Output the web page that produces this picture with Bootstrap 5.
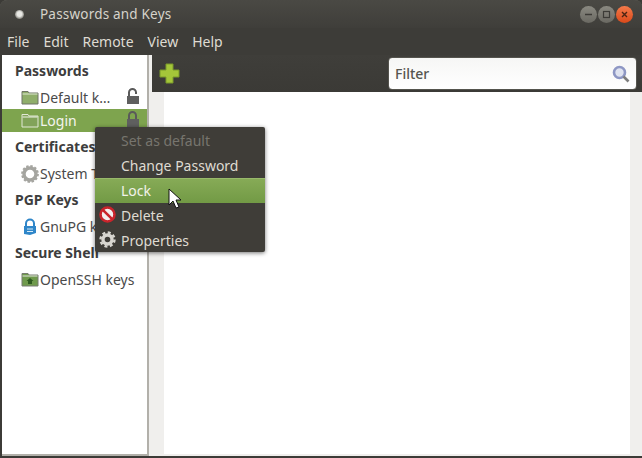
<!DOCTYPE html>
<html lang="en">
<head>
  <meta charset="UTF-8" />
  <title>Passwords and Keys</title>
  <link href="https://cdn.jsdelivr.net/npm/bootstrap@5.3.3/dist/css/bootstrap.min.css" rel="stylesheet" />
  <style>
    html, body { height: 100%; margin: 0; overflow: hidden; }
    body { background: #3c3b37; font-family: "Noto Sans", "Open Sans", sans-serif; font-size: 14px; }
    .app-window { position: relative; width: 642px; height: 458px; background: #3c3b37; overflow: hidden; border-radius: 7px 7px 0 0; box-shadow: inset 0 1px 0 #6b6a64; }
    .title-bar { height: 28px; padding: 0 9px 0 15px; background: linear-gradient(#4a4944, #3f3e3a); color: #d6d3cb; font-size: 13.5px; letter-spacing: .2px; }
    .title-dot { width: 9px; height: 9px; border-radius: 50%; background: radial-gradient(circle at 50% 45%, #e8e8e4 35%, #77766f 75%, #3c3b37); margin-right: 16px; }
    .win-btn { width: 17px; height: 17px; border-radius: 50%; background: linear-gradient(#8a8981, #6a6962); margin-left: 1px; color: #3c3b37; }
    .win-btn.close-red { background: linear-gradient(#f47a4a, #d9491a); }
    .menu-bar { height: 27px; padding-left: 7px; gap: 14px; color: #dfdbd2; font-size: 14px; background: #3d3c38; }
    .body-row { height: 401px; padding-left: 2px; }
    .side-pane { width: 147px; background: #fff; border-right: 2px solid #b2b0aa; border-bottom: 2px solid #b2b0aa; color: #3c3c3c; flex: none; padding-top: 5px; }
    .side-head { height: 26px; line-height: 22px; padding-left: 13px; font-weight: 700; font-size: 14px; color: #3d3d3d; white-space: nowrap; }
    .side-item { height: 23px; padding-left: 19px; gap: 1px; white-space: nowrap; color: #4a4a4a; position: relative; }
    .side-item.picked { background: #7ea44e; color: #f4f4ee; }
    .side-lock { position: absolute; left: 124px; top: 2px; }
    .main-pane { min-width: 0; background: #f0efed; }
    .tool-strip { height: 37px; margin-left: 3px; background: linear-gradient(#3f3e3a, #3b3a36); padding: 0 5px 0 7px; }
    .filter-box { width: 249px; height: 33px; background: linear-gradient(#f6f6f5, #fff); border: 1px solid #55544e; border-radius: 4px; padding: 0 6px; color: #55554f; font-weight: 500; font-size: 14px; }
    .content-area { height: 362px; margin: 0 12px 2px 15px; background: #fff; }
    .pop-menu { position: absolute; left: 95px; top: 127px; width: 170px; height: 125px; padding: 1px 0 0; background: #3f3d38; color: #dfdbd2; border-radius: 2px; box-shadow: 0 1px 4px rgba(0,0,0,.55); font-size: 14px; }
    .pop-row { height: 25px; padding-left: 26px; position: relative; }
    .pop-row.off { color: #77756e; }
    .pop-row.on { background: linear-gradient(#87ab57, #729a45); color: #f2f2ea; box-shadow: inset 0 1px 0 #98b96b; }
    .pop-icon { position: absolute; left: 4px; top: 3px; }
    .mouse-arrow { position: absolute; left: 168px; top: 188px; }
  </style>
</head>
<body>
  <div class="app-window">
    <div class="title-bar d-flex align-items-center">
      <span class="title-dot"></span>
      <span class="flex-grow-1">Passwords and Keys</span>
      <span class="win-btn d-flex align-items-center justify-content-center">
        <svg width="9" height="9" viewBox="0 0 9 9"><path d="M1 4.5h7" stroke="#3c3b37" stroke-width="1.5"/></svg>
      </span>
      <span class="win-btn d-flex align-items-center justify-content-center">
        <svg width="9" height="9" viewBox="0 0 9 9"><rect x="1.5" y="1.5" width="6" height="6" fill="none" stroke="#3c3b37" stroke-width="1.2"/></svg>
      </span>
      <span class="win-btn close-red d-flex align-items-center justify-content-center">
        <svg width="9" height="9" viewBox="0 0 9 9"><path d="M2 2l5 5M7 2l-5 5" stroke="#4a2413" stroke-width="1.4"/></svg>
      </span>
    </div>
    <div class="menu-bar d-flex align-items-center">
      <span>File</span><span>Edit</span><span>Remote</span><span>View</span><span>Help</span>
    </div>
    <div class="body-row d-flex">
      <div class="side-pane">
        <div class="side-head">Passwords</div>
        <div class="side-item d-flex align-items-center">
          <svg width="18" height="15" viewBox="0 0 18 15"><path d="M1 3V1.5h6l1 1.5h9v11H1z" fill="#8fae6a" stroke="#6f7466"/><path d="M1.5 4h15" stroke="#dfe8d2"/></svg>
          <span>Default k…</span>
          <svg class="side-lock" width="14" height="17" viewBox="0 0 14 17"><path d="M3 8V4.5a3.5 3.5 0 0 1 7 0V6" fill="none" stroke="#5a5a5a" stroke-width="2"/><rect x="1" y="8" width="12" height="8" fill="#5f5f5f"/></svg>
        </div>
        <div class="side-item picked d-flex align-items-center">
          <svg width="18" height="15" viewBox="0 0 18 15"><path d="M1 3V1.5h6l1 1.5h9v11H1z" fill="#82a35a" stroke="#e2e8d6"/><path d="M1.5 4h15" stroke="#eef2e6"/></svg>
          <span>Login</span>
          <svg class="side-lock" width="14" height="17" viewBox="0 0 14 17"><path d="M3 8V4.5a3.5 3.5 0 0 1 7 0V8" fill="none" stroke="#5a5a5a" stroke-width="2"/><rect x="1" y="8" width="12" height="8" fill="#5f5f5f"/></svg>
        </div>
        <div class="side-head mt-1">Certificates</div>
        <div class="side-item d-flex align-items-center">
          <svg width="18" height="18" viewBox="0 0 18 18"><circle cx="9" cy="9" r="6" fill="none" stroke="#a5a5a0" stroke-width="3.4"/><circle cx="9" cy="9" r="8" fill="none" stroke="#a5a5a0" stroke-width="1.8" stroke-dasharray="2.4 1.8"/></svg>
          <span>System T</span>
        </div>
        <div class="side-head mt-1">PGP Keys</div>
        <div class="side-item d-flex align-items-center">
          <svg width="18" height="18" viewBox="0 0 18 18"><path d="M5 8V5.5a4 4 0 0 1 8 0V8" fill="none" stroke="#2f86c9" stroke-width="2"/><path d="M3 8h12v7l-6 2-6-1z" fill="#2f86c9"/><path d="M6 11h6M6 13.500h6" stroke="#d5ebf8"/></svg>
          <span>GnuPG k</span>
        </div>
        <div class="side-head mt-1">Secure Shell</div>
        <div class="side-item d-flex align-items-center">
          <svg width="18" height="15" viewBox="0 0 18 15"><path d="M1 3V1.5h6l1 1.5h9v11H1z" fill="#6f9a4c" stroke="#777b70"/><path d="M1.500 4h15" stroke="#e4e6df"/><path d="M9 6l3.500 3H11v3H7V9H5.500z" fill="#2e5a20"/></svg>
          <span>OpenSSH keys</span>
        </div>
      </div>
      <div class="main-pane flex-grow-1">
        <div class="tool-strip d-flex align-items-center justify-content-between">
          <svg width="21" height="21" viewBox="0 0 21 21"><path d="M7 1h7v6h6v7h-6v6H7v-6H1V7h6z" fill="#a4c639" stroke="#7b9a2a"/></svg>
          <div class="filter-box d-flex align-items-center justify-content-between">
            <span>Filter</span>
            <svg width="18" height="18" viewBox="0 0 18 18"><circle cx="7.500" cy="7.500" r="5.500" fill="#dfe3f0" stroke="#8e97c4" stroke-width="2.600"/><path d="M11.500 11.500l5 5" stroke="#7d7d7d" stroke-width="2.600"/></svg>
          </div>
        </div>
        <div class="content-area"></div>
      </div>
    </div>

    <div class="pop-menu">
      <div class="pop-row off d-flex align-items-center">Set as default</div>
      <div class="pop-row d-flex align-items-center">Change Password</div>
      <div class="pop-row on d-flex align-items-center">Lock</div>
      <div class="pop-row d-flex align-items-center">
        <svg class="pop-icon" width="17" height="17" viewBox="0 0 17 17"><circle cx="8.500" cy="8.500" r="7" fill="#f3eeee" stroke="#c9242b" stroke-width="2.600"/><path d="M3.800 3.800l9.400 9.400" stroke="#c9242b" stroke-width="2.600"/></svg>
        Delete
      </div>
      <div class="pop-row d-flex align-items-center">
        <svg class="pop-icon" width="17" height="17" viewBox="0 0 17 17"><circle cx="8.500" cy="8.500" r="4.500" fill="none" stroke="#d8d6d0" stroke-width="3.400"/><circle cx="8.500" cy="8.500" r="7" fill="none" stroke="#d8d6d0" stroke-width="2.400" stroke-dasharray="3 2.500"/></svg>
        Properties
      </div>
    </div>
    <svg class="mouse-arrow" width="14" height="21" viewBox="0 0 14 21"><path d="M1 1v16l4-4 3 7 3-1-3-7h5z" fill="#fff" stroke="#111"/></svg>
  </div>
  <script src="https://cdn.jsdelivr.net/npm/bootstrap@5.3.3/dist/js/bootstrap.bundle.min.js"></script>
</body>
</html>
